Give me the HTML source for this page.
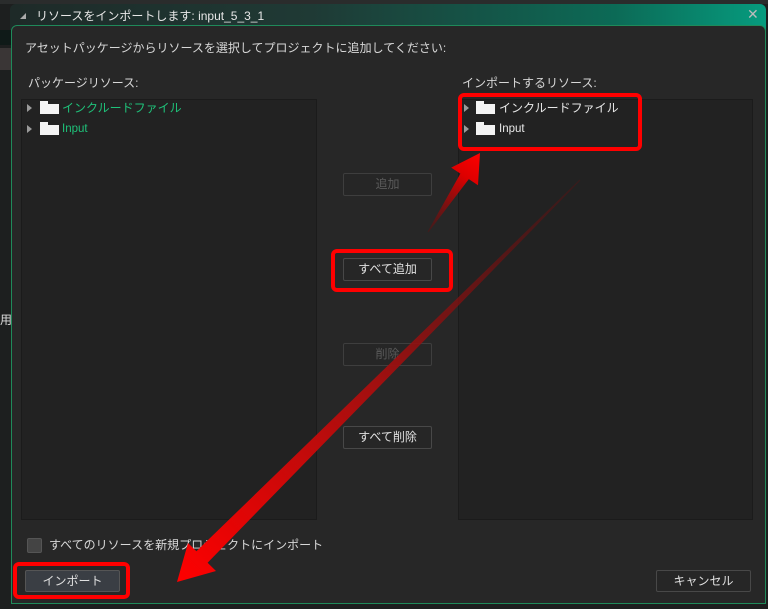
<!DOCTYPE html>
<html><head><meta charset="utf-8"><style>
*{margin:0;padding:0;box-sizing:border-box}
body{width:768px;height:609px;background:#1d1f1f;position:relative;overflow:hidden;font-family:"Liberation Sans","Noto Sans CJK JP",sans-serif;color:#d8d8d8;font-size:12px}
.abs{position:absolute}
.title{left:10px;top:4px;width:756px;height:26px;background:linear-gradient(90deg,#1e2a28 0%,#1f3a35 40%,#0c6a56 80%,#069b7e 100%);border-radius:6px 6px 0 0}
.ttext{left:36px;top:7px;font-size:12px;color:#e8e8e8}
.body{left:11px;top:25px;width:755px;height:579px;background:#272727;border:1px solid #1f8a5a;border-radius:6px 6px 0 0}
.list{background:#222;border:1px solid #1b1b1b}
.btn{border:1px solid #484848;border-radius:2px;background:#262626;text-align:center;line-height:20px;font-size:12px;color:#e0e0e0}
.dis{color:#5a5a5a;border-color:#3e3e3e}
.tri{width:0;height:0;border-left:5px solid #9a9a9a;border-top:4px solid transparent;border-bottom:4px solid transparent}
.fold{width:19px;height:10px;background:#f4f4f4}
.fold:before{content:"";position:absolute;left:0;top:-3px;width:8px;height:3px;background:#f4f4f4}
.rb{border:4px solid #f00;border-radius:6px}
</style></head><body>
<div class="abs" style="left:0;top:0;width:768px;height:4px;background:#2a2c2c"></div>
<div class="abs" style="left:0;top:30px;width:11px;height:15px;background:#0f1a18"></div>
<div class="abs" style="left:0;top:48px;width:11px;height:22px;background:#3a3636"></div>
<div class="abs" style="left:0;top:311px;font-size:12px;color:#ddd">用</div>
<div class="abs title"></div>
<div class="abs" style="left:20px;top:13px;width:0;height:0;border-left:6px solid transparent;border-bottom:6px solid #aaa"></div>
<div class="abs ttext">リソースをインポートします: input_5_3_1</div>
<div class="abs" style="left:747px;top:6px;font-size:14px;color:#bbb">✕</div>
<div class="abs body"></div>
<div class="abs" style="left:25px;top:39px;font-size:12px">アセットパッケージからリソースを選択してプロジェクトに追加してください:</div>
<div class="abs" style="left:28px;top:74px;font-size:12px">パッケージリソース:</div>
<div class="abs" style="left:462px;top:74px;font-size:12px">インポートするリソース:</div>
<div class="abs list" style="left:21px;top:99px;width:296px;height:421px"></div>
<div class="abs list" style="left:458px;top:99px;width:295px;height:421px"></div>

<div class="abs tri" style="left:27px;top:104px"></div>
<div class="abs fold" style="left:40px;top:104px"></div>
<div class="abs" style="left:62px;top:99px;font-size:12px;color:#1fc27a">インクルードファイル</div>
<div class="abs tri" style="left:27px;top:125px"></div>
<div class="abs fold" style="left:40px;top:125px"></div>
<div class="abs" style="left:62px;top:123px;font-size:11.5px;color:#1fc27a">Input</div>

<div class="abs tri" style="left:464px;top:104px"></div>
<div class="abs fold" style="left:476px;top:104px"></div>
<div class="abs" style="left:499px;top:99px;font-size:12px;color:#e8e8e8">インクルードファイル</div>
<div class="abs tri" style="left:464px;top:125px"></div>
<div class="abs fold" style="left:476px;top:125px"></div>
<div class="abs" style="left:499px;top:123px;font-size:11.5px;color:#e8e8e8">Input</div>

<div class="abs btn dis" style="left:343px;top:173px;width:89px;height:23px">追加</div>
<div class="abs btn" style="left:343px;top:258px;width:89px;height:23px">すべて追加</div>
<div class="abs btn dis" style="left:343px;top:343px;width:89px;height:23px">削除</div>
<div class="abs btn" style="left:343px;top:426px;width:89px;height:23px">すべて削除</div>

<div class="abs" style="left:27px;top:538px;width:15px;height:15px;background:#444;border:1px solid #555;border-radius:2px"></div>
<div class="abs" style="left:49px;top:536px;font-size:12px">すべてのリソースを新規プロジェクトにインポート</div>
<div class="abs btn" style="left:25px;top:570px;width:95px;height:22px;background:#3a3e44;border-color:#555">インポート</div>
<div class="abs btn" style="left:656px;top:570px;width:95px;height:22px">キャンセル</div>

<div class="abs rb" style="left:458px;top:93px;width:184px;height:58px"></div>
<div class="abs rb" style="left:331px;top:249px;width:122px;height:43px"></div>
<div class="abs rb" style="left:13px;top:562px;width:117px;height:37px"></div>

<svg class="abs" style="left:0;top:0" width="768" height="609">
<defs>
<linearGradient id="g1" x1="428" y1="232" x2="480" y2="153" gradientUnits="userSpaceOnUse"><stop offset="0" stop-color="#5a1010" stop-opacity="0.5"/><stop offset="0.7" stop-color="#d00"/><stop offset="1" stop-color="#f00"/></linearGradient>
<linearGradient id="g2" x1="580" y1="180" x2="177" y2="582" gradientUnits="userSpaceOnUse"><stop offset="0" stop-color="#5a1010" stop-opacity="0.4"/><stop offset="0.5" stop-color="#a01010"/><stop offset="1" stop-color="#f00"/></linearGradient>
</defs>
<polygon fill="url(#g1)" points="428.4,232.3 468.8,179.1 478,185.2 480,153 451.2,167.6 460.4,173.6 427.6,231.7"/>
<polygon fill="url(#g2)" points="580.4,180.4 207.6,562.7 216,571 177,582 188,543 196.4,551.3 579.6,179.6"/>
</svg>
</body></html>
